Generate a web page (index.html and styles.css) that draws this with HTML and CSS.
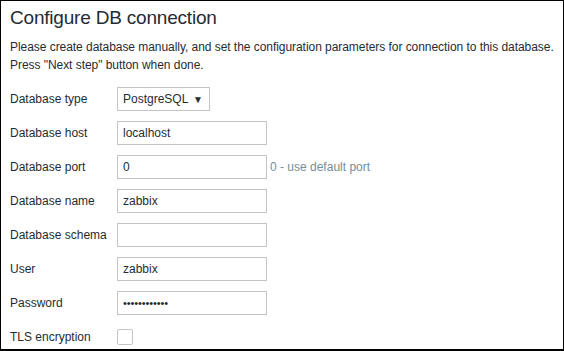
FILE: index.html
```html
<!DOCTYPE html>
<html>
<head>
<meta charset="utf-8">
<link rel="stylesheet" href="styles.css">
</head>
<body>
<div class="frame">
  <h1 class="title">Configure DB connection</h1>
  <p class="desc">Please create database manually, and set the configuration parameters for connection to this database.<br>Press "Next step" button when done.</p>
  <div class="form">
    <label class="lbl">Database type</label>
    <div class="field"><div class="select"><span>PostgreSQL</span><span class="arrow">&#9660;</span></div></div>

    <label class="lbl">Database host</label>
    <div class="field"><input class="input" type="text" value="localhost"></div>

    <label class="lbl">Database port</label>
    <div class="field"><input class="input" type="text" value="0"><span class="hint">0 - use default port</span></div>

    <label class="lbl">Database name</label>
    <div class="field"><input class="input" type="text" value="zabbix"></div>

    <label class="lbl">Database schema</label>
    <div class="field"><input class="input" type="text" value=""></div>

    <label class="lbl">User</label>
    <div class="field"><input class="input" type="text" value="zabbix"></div>

    <label class="lbl">Password</label>
    <div class="field"><input class="input pass" type="password" value="zabbixzabbix"></div>

    <label class="lbl">TLS encryption</label>
    <div class="field"><span class="check"></span></div>
  </div>
</div>
</body>
</html>
```
FILE: styles.css
```css
html, body {
  margin: 0;
  padding: 0;
  background: #ffffff;
}
body {
  font-family: "Liberation Sans", Arial, sans-serif;
  color: #1f2c33;
}
.frame {
  box-sizing: border-box;
  width: 564px;
  height: 351px;
  border: 1px solid #000;
  border-bottom-width: 2px;
  padding: 5px 9px 0 9px;
  overflow: hidden;
}
.title {
  margin: 0;
  font-size: 19px;
  letter-spacing: -0.2px;
  font-weight: normal;
  line-height: 24px;
}
.desc {
  margin: 8px 0 0 0;
  font-size: 12px;
  line-height: 18px;
  white-space: nowrap;
  letter-spacing: -0.05px;
}
.form {
  margin-top: 13px;
  display: grid;
  grid-template-columns: 107px auto;
  row-gap: 10px;
  font-size: 12px;
}
.lbl {
  display: flex;
  align-items: center;
  height: 24px;
}
.field {
  display: flex;
  align-items: center;
  height: 24px;
}
.input {
  box-sizing: border-box;
  width: 150px;
  height: 24px;
  margin: 0;
  padding: 0 5px;
  border: 1px solid #c4c4c4;
  border-radius: 0;
  font-family: "Liberation Sans", Arial, sans-serif;
  font-size: 12px;
  color: #1f2c33;
  background: #fff;
  outline: none;
}
.pass {
  font-size: 11px;
  letter-spacing: -0.1px;
}
.select {
  box-sizing: border-box;
  width: 93px;
  height: 24px;
  border: 1px solid #c4c4c4;
  padding: 0 5px;
  display: flex;
  align-items: center;
  justify-content: space-between;
}
.arrow {
  font-size: 10px;
  color: #1f2c33;
  margin-right: 1px;
}
.hint {
  margin-left: 3px;
  color: #768d99;
}
.check {
  box-sizing: border-box;
  width: 16px;
  height: 16px;
  border: 1px solid #c4c4c4;
  border-radius: 2px;
  background: #fff;
}
```
